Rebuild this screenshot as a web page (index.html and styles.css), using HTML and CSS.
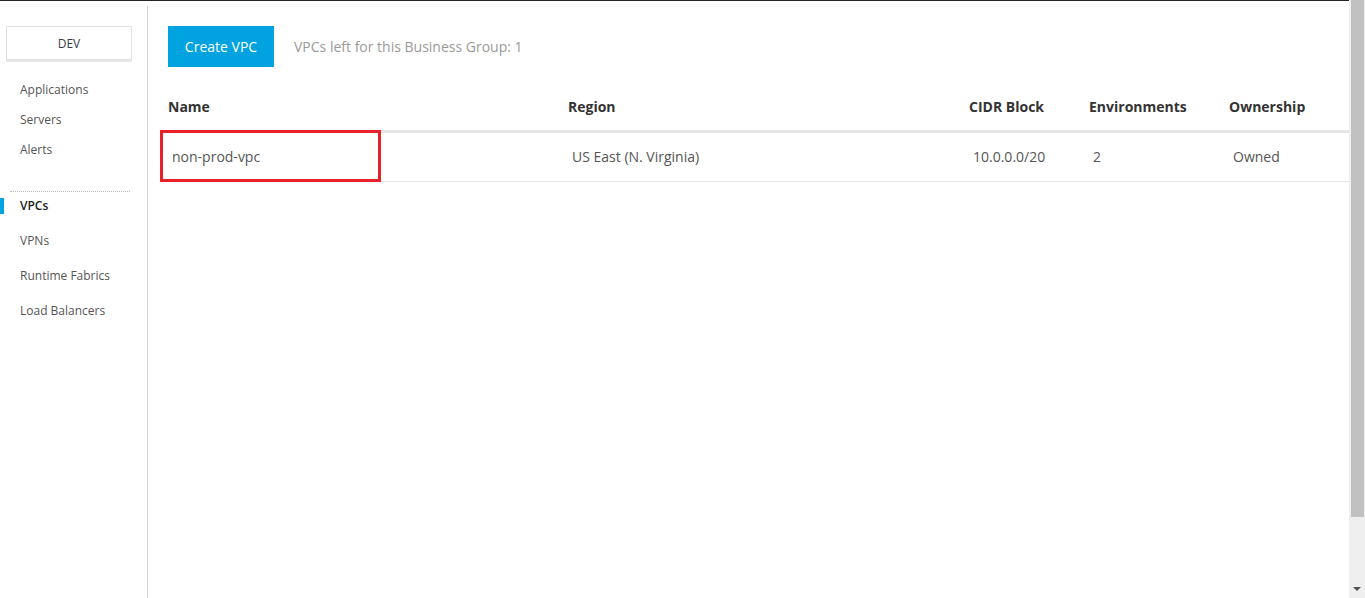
FILE: index.html
```html
<!DOCTYPE html>
<html lang="en">
<head>
  <meta charset="UTF-8">
  <title>VPCs</title>
  <link rel="stylesheet" href="styles.css">
</head>
<body>
  <div class="page">
    <div class="layout">
      <div class="sidebar">
        <div class="env-box">DEV</div>
        <ul class="nav">
          <li>Applications</li>
          <li>Servers</li>
          <li>Alerts</li>
        </ul>
        <div class="nav-sep"></div>
        <ul class="nav nav-second">
          <li class="active">VPCs</li>
          <li>VPNs</li>
          <li>Runtime Fabrics</li>
          <li>Load Balancers</li>
        </ul>
      </div>

      <div class="content">
        <div class="toolbar">
          <button class="btn-primary">Create VPC</button>
          <span class="quota">VPCs left for this Business Group: 1</span>
        </div>

        <div class="table-wrap">
          <table class="vpc-table">
            <colgroup>
              <col style="width: 400px">
              <col style="width: 401px">
              <col style="width: 120px">
              <col style="width: 140px">
              <col>
            </colgroup>
            <thead>
              <tr>
                <th>Name</th>
                <th>Region</th>
                <th>CIDR Block</th>
                <th>Environments</th>
                <th>Ownership</th>
              </tr>
            </thead>
            <tbody>
              <tr>
                <td>non-prod-vpc</td>
                <td>US East (N. Virginia)</td>
                <td>10.0.0.0/20</td>
                <td>2</td>
                <td>Owned</td>
              </tr>
            </tbody>
          </table>
          <div class="highlight"></div>
        </div>
      </div>
    </div>
  </div>

  <div class="scrollbar">
    <div class="thumb"></div>
    <div class="arrow-down"></div>
  </div>
</body>
</html>
```

FILE: styles.css
```css
* {
  box-sizing: border-box;
}

body {
  margin: 0;
  height: 100vh;
  display: flex;
  overflow: hidden;
  background: #fff;
  font-family: "Open Sans", "Noto Sans", Arial, sans-serif;
  color: #333;
}

.page {
  flex: 1;
  display: flex;
  flex-direction: column;
  border-top: 1px solid #262626;
}

.layout {
  flex: 1;
  display: flex;
  padding-top: 5px;
}

/* sidebar */
.sidebar {
  width: 148px;
  flex-shrink: 0;
  border-right: 1px solid #d6d6d6;
  padding-top: 20px;
}

.env-box {
  margin-left: 6px;
  width: 126px;
  height: 34px;
  border: 1px solid #e2e2e2;
  box-shadow: 0 2px 0 #e6e6e6;
  display: flex;
  align-items: center;
  justify-content: center;
  font-size: 12px;
  color: #3a3a4a;
}

.nav {
  list-style: none;
  margin: 15px 0 0;
  padding: 0;
}

.nav li {
  padding-left: 20px;
  height: 30px;
  line-height: 30px;
  font-size: 12px;
  color: #555;
  position: relative;
}

.nav-sep {
  margin: 26px 17px 0 10px;
  border-top: 1px dotted #bbb;
}

.nav-second {
  margin-top: 1px;
}

.nav-second li {
  height: 26px;
  line-height: 26px;
  margin-bottom: 9px;
}

.nav li.active {
  color: #222;
  font-weight: 600;
}

.nav li.active::before {
  content: "";
  position: absolute;
  left: 0;
  top: 5px;
  width: 4px;
  height: 16px;
  background: #00a2df;
}

/* main */
.content {
  flex: 1;
  padding: 20px 0 0 20px;
}

.toolbar {
  display: flex;
  align-items: center;
  gap: 20px;
}

.btn-primary {
  width: 106px;
  height: 41px;
  border: none;
  background: #00a2df;
  color: #fff;
  font-family: inherit;
  font-size: 14px;
  padding: 0;
}

.quota {
  font-size: 14px;
  color: #9a9a9a;
}

.table-wrap {
  position: relative;
  margin-top: 17px;
}

.vpc-table {
  width: 100%;
  table-layout: fixed;
  border-collapse: collapse;
  font-size: 14px;
}

.vpc-table th {
  height: 47px;
  padding: 0;
  text-align: left;
  font-weight: 700;
  color: #333;
  border-bottom: 3px solid #e6e6e6;
}

.vpc-table td {
  height: 50px;
  padding: 0 0 0 4px;
  color: #555;
  border-bottom: 1px solid #e6e6e6;
}

.highlight {
  position: absolute;
  left: -8px;
  top: 46px;
  width: 221px;
  height: 52px;
  border: 3px solid #e8202a;
  pointer-events: none;
}

/* fake scrollbar */
.scrollbar {
  width: 16px;
  flex-shrink: 0;
  background: #efefef;
  display: flex;
  flex-direction: column;
}

.thumb {
  margin-left: 2px;
  width: 13px;
  height: 517px;
  background: #c1c1c1;
}

.arrow-down {
  margin: auto 0 7px 4px;
  width: 0;
  height: 0;
  border-left: 4px solid transparent;
  border-right: 4px solid transparent;
  border-top: 4px solid #505050;
}
```
